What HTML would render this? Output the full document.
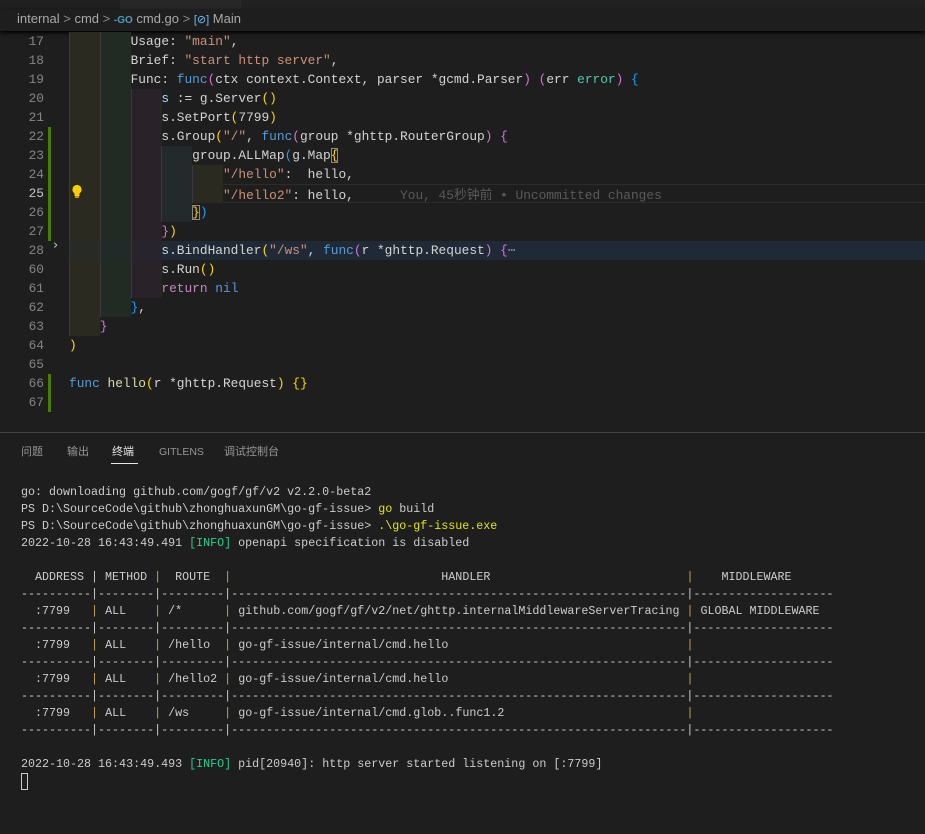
<!DOCTYPE html>
<html><head><meta charset="utf-8"><style>
*{margin:0;padding:0;box-sizing:border-box}
body{width:925px;height:834px;background:#1e1e1e;overflow:hidden;position:relative;font-family:"Liberation Mono",monospace}
.abs{position:absolute}
.ln{position:absolute;left:0;width:44px;text-align:right;font-size:12.83px;color:#858585;height:19px;line-height:19px}
.cl{position:absolute;left:69px;white-space:pre;font-size:12.83px;line-height:19px;height:19px;color:#d4d4d4}
.s{color:#ce9178}.k{color:#569cd6}.r{color:#c586c0}.t{color:#4ec9b0}.n{color:#b5cea8}
.b1{color:#ffd700}.b2{color:#da70d6}.b3{color:#179fff}
.ig{position:absolute;height:19px;width:31px;border-left:1px solid #3a3a3a}
.L1{background:#2a2a20}.L2{background:#222a24}.L3{background:#2a2229}.L4{background:#222a2c}.L5{background:#2a2a20}
.term{position:absolute;left:21px;white-space:pre;font-size:11.68px;line-height:17px;color:#cccccc}
.y{color:#e5e510}.g{color:#23d18b}.p{color:#c8a24b}
.tab{position:absolute;top:444px;height:16px;line-height:16px;font-family:"Liberation Sans","Noto Sans CJK SC",sans-serif;font-size:11px;color:#969696}
</style></head><body>
<div class="abs" style="left:0;top:0;width:925px;height:9px;background:#222"></div>
<div class="abs" style="left:0;top:0;width:120px;height:9px;background:#1f1f1f"></div>
<div class="abs" style="left:120px;top:0;width:121px;height:9px;background:#282828"></div>
<div class="abs" style="left:0;top:9px;width:925px;height:22px;background:#1e1e1e;box-shadow:0 2px 4px #000"></div>
<div class="abs" style="left:17px;top:11px;font-family:'Liberation Sans',sans-serif;font-size:13px;color:#a9a9a9;white-space:pre">internal <span style="color:#888">&gt;</span> cmd <span style="color:#888">&gt;</span> <span style="color:#519aba;font-size:10px;font-weight:bold">-GO</span> cmd.go <span style="color:#888">&gt;</span> <span style="color:#75beff;font-size:11px">[⊘]</span> Main</div>

<div id="ind"></div>
<script>
(function(){
var lines=[[17,2],[18,2],[19,2],[20,3],[21,3],[22,3],[23,4],[24,5],[25,5],[26,4],[27,3],[28,3],[60,3],[61,3],[62,2],[63,1],[64,0],[65,0],[66,0],[67,0]];
var h='';
for(var i=0;i<lines.length;i++){var yy=32+19*i;var n=lines[i][0],lv=lines[i][1];
if(n==28)h+='<div class="abs" style="left:69px;top:'+yy+'px;width:856px;height:19px;background:#1f2a36"></div>';
if(n==25)h+='<div class="abs" style="left:69px;top:'+yy+'px;width:856px;height:19px;border-top:1px solid #2c2c2c;border-bottom:1px solid #2c2c2c"></div>';
for(var l=0;l<lv;l++){h+='<div class="ig L'+(l+1)+'" style="left:'+(69+l*30.8)+'px;top:'+yy+'px;'+(n==28?'opacity:.75':'')+'"></div>';}
h+='<div class="ln" style="top:'+yy+'px;'+(n==25?'color:#c6c6c6':'')+'">'+n+'</div>';
if((n>=22&&n<=27)||n>=66)h+='<div class="abs" style="left:48px;top:'+yy+'px;width:3px;height:19px;background:#487e02"></div>';}
document.getElementById('ind').innerHTML=h;
})();
</script>
<div class="abs" style="left:53px;top:238px;color:#c5c5c5;font-size:13px;font-family:'DejaVu Sans',sans-serif">›</div>
<svg class="abs" style="left:71px;top:184px" width="12" height="15" viewBox="0 0 12 15"><circle cx="6" cy="5.5" r="4.6" fill="#ffcc00"/><rect x="3.5" y="8" width="5" height="4" fill="#ffcc00"/><rect x="4" y="12" width="4" height="2" fill="#c09000"/></svg>

<div class="cl" style="top:32px">        Usage: <span class="s">"main"</span>,</div>
<div class="cl" style="top:51px">        Brief: <span class="s">"start http server"</span>,</div>
<div class="cl" style="top:70px">        Func: <span class="k">func</span><span class="b2">(</span>ctx context.Context, parser *gcmd.Parser<span class="b2">)</span> <span class="b2">(</span>err <span class="t">error</span><span class="b2">)</span> <span class="b3">{</span></div>
<div class="cl" style="top:89px">            <span style="color:#9cdcfe">s</span> := g.Server<span class="b1">()</span></div>
<div class="cl" style="top:108px">            s.SetPort<span class="b1">(</span>7799<span class="b1">)</span></div>
<div class="cl" style="top:127px">            s.Group<span class="b1">(</span><span class="s">"/"</span>, <span class="k">func</span><span class="b2">(</span>group *ghttp.RouterGroup<span class="b2">)</span> <span class="b2">{</span></div>
<div class="cl" style="top:146px">                group.ALLMap<span class="b3">(</span>g.Map<span class="b1" style="outline:1px solid #888;outline-offset:-1px">{</span></div>
<div class="cl" style="top:165px">                    <span class="s">"/hello"</span>:  hello,</div>
<div class="cl" style="top:184px">                    <span class="s">"/hello2"</span>: hello,      <span style="color:#5a5a5a">You, 45<span style="font-family:'Noto Sans CJK SC',sans-serif">秒钟前</span> • Uncommitted changes</span></div>
<div class="cl" style="top:203px">                <span class="b1" style="outline:1px solid #888;outline-offset:-1px">}</span><span class="b3">)</span></div>
<div class="cl" style="top:222px">            <span class="b2">}</span><span class="b1">)</span></div>
<div class="cl" style="top:241px">            s.BindHandler<span class="b1">(</span><span class="s">"/ws"</span>, <span class="k">func</span><span class="b2">(</span>r *ghttp.Request<span class="b2">)</span> <span class="b2">{</span><span style="color:#888">⋯</span></div>
<div class="cl" style="top:260px">            s.Run<span class="b1">()</span></div>
<div class="cl" style="top:279px">            <span class="r">return</span> <span class="k">nil</span></div>
<div class="cl" style="top:298px">        <span class="b3">}</span>,</div>
<div class="cl" style="top:317px">    <span class="b2">}</span></div>
<div class="cl" style="top:336px"><span class="b1">)</span></div>
<div class="cl" style="top:374px"><span class="k">func</span> <span style="color:#dcdcaa">hello</span><span class="b1">(</span>r *ghttp.Request<span class="b1">)</span> <span class="b1">{}</span></div>

<div class="abs" style="left:0;top:432px;width:925px;height:1px;background:#414141"></div>
<div class="tab" style="left:21px">问题</div>
<div class="tab" style="left:67px">输出</div>
<div class="tab" style="left:112px;color:#e7e7e7">终端</div>
<div class="abs" style="left:111px;top:463px;width:27px;height:1px;background:#e7e7e7"></div>
<div class="tab" style="left:159px;font-size:10.5px">GITLENS</div>
<div class="tab" style="left:224px">调试控制台</div>

<div class="term" style="top:484px">go: downloading github.com/gogf/gf/v2 v2.2.0-beta2
PS D:\SourceCode\github\zhonghuaxunGM\go-gf-issue&gt; <span class="y">go</span> build
PS D:\SourceCode\github\zhonghuaxunGM\go-gf-issue&gt; <span class="y">.\go-gf-issue.exe</span>
2022-10-28 16:43:49.491 <span class="g">[INFO]</span> openapi specification is disabled

  ADDRESS | METHOD <span class="p">|</span>  ROUTE  <span class="p">|</span>                              HANDLER                            <span class="p">|</span>    MIDDLEWARE
----------|--------|---------|-----------------------------------------------------------------|--------------------
  :7799   <span class="p">|</span> ALL    <span class="p">|</span> /*      <span class="p">|</span> github.com/gogf/gf/v2/net/ghttp.internalMiddlewareServerTracing <span class="p">|</span> GLOBAL MIDDLEWARE
----------|--------|---------|-----------------------------------------------------------------|--------------------
  :7799   <span class="p">|</span> ALL    <span class="p">|</span> /hello  <span class="p">|</span> go-gf-issue/internal/cmd.hello                                  <span class="p">|</span>
----------|--------|---------|-----------------------------------------------------------------|--------------------
  :7799   <span class="p">|</span> ALL    <span class="p">|</span> /hello2 <span class="p">|</span> go-gf-issue/internal/cmd.hello                                  <span class="p">|</span>
----------|--------|---------|-----------------------------------------------------------------|--------------------
  :7799   <span class="p">|</span> ALL    <span class="p">|</span> /ws     <span class="p">|</span> go-gf-issue/internal/cmd.glob..func1.2                          <span class="p">|</span>
----------|--------|---------|-----------------------------------------------------------------|--------------------

2022-10-28 16:43:49.493 <span class="g">[INFO]</span> pid[20940]: http server started listening on [:7799]</div>
<div class="abs" style="left:21px;top:773px;width:7px;height:17px;border:1px solid #ccc"></div>
</body></html>
